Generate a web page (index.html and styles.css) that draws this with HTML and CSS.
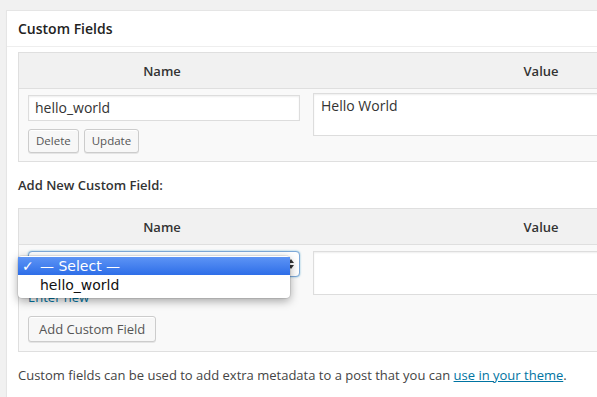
FILE: index.html
```html
<!DOCTYPE html>
<html>
<head>
<meta charset="utf-8">
<link rel="stylesheet" href="styles.css">
</head>
<body>
<div class="wrap">
  <div class="postbox">
    <h3 class="hndle">Custom Fields</h3>
    <div class="inside">
      <table class="list-table">
        <thead>
          <tr><th class="col-name">Name</th><th class="col-value">Value</th></tr>
        </thead>
        <tbody>
          <tr>
            <td class="cell-name">
              <div class="text-input">hello_world</div>
              <div class="btn-row">
                <span class="btn btn-small">Delete</span>
                <span class="btn btn-small">Update</span>
              </div>
            </td>
            <td class="cell-value">
              <div class="textarea">Hello World</div>
            </td>
          </tr>
        </tbody>
      </table>

      <p class="add-title">Add New Custom Field:</p>

      <table class="list-table">
        <thead>
          <tr><th class="col-name">Name</th><th class="col-value">Value</th></tr>
        </thead>
        <tbody>
          <tr>
            <td class="cell-name new">
              <div class="select">
                <svg class="arrows" width="6" height="10" viewBox="0 0 6 10"><path d="M0 4 L3 0 L6 4 Z M0 6 L3 10 L6 6 Z" fill="#333"/></svg>
              </div>
              <a class="enter-new" href="#">Enter new</a>
              <div class="btn-row add-row">
                <span class="btn">Add Custom Field</span>
              </div>
            </td>
            <td class="cell-value new">
              <div class="textarea tall"></div>
            </td>
          </tr>
        </tbody>
      </table>

      <p class="note">Custom fields can be used to add extra metadata to a post that you can <a href="#">use in your theme</a>.</p>
    </div>
  </div>
</div>

<div class="popup">
  <div class="opt selected"><span class="check">✓</span>— Select —</div>
  <div class="opt"><span class="check"></span>hello_world</div>
</div>
</body>
</html>
```

FILE: styles.css
```css
html, body {
  margin: 0;
  padding: 0;
  overflow: hidden;
}

body {
  background: #f1f1f1;
  font-family: "Open Sans", "Liberation Sans", sans-serif;
  font-size: 13px;
  color: #444;
  width: 597px;
  height: 397px;
  position: relative;
}

.wrap {
  padding: 10px 0 0 6px;
}

.postbox {
  width: 760px;
  background: #fff;
  border: 1px solid #e5e5e5;
  box-shadow: 0 1px 1px rgba(0, 0, 0, 0.04);
  padding-bottom: 30px;
}

.hndle {
  margin: 0;
  height: 35px;
  line-height: 35px;
  font-size: 14px;
  font-weight: 600;
  color: #222;
  padding-left: 11px;
  border-bottom: 1px solid #eee;
}

.inside {
  padding: 5px 11px 0 11px;
}

.list-table {
  width: 760px;
  border: 1px solid #dfdfdf;
  border-spacing: 0;
  border-collapse: separate;
  background: #f9f9f9;
}

.list-table th {
  height: 35px;
  padding: 0;
  background: #f1f1f1;
  border-bottom: 1px solid #dfdfdf;
  font-weight: 600;
  font-size: 13px;
  color: #333;
  text-align: center;
}

.col-name {
  width: 286px;
}

.list-table td {
  padding: 0;
  vertical-align: top;
}

.cell-name {
  padding: 6px 0 8px 9px !important;
}

.cell-value {
  padding: 4px 0 8px 8px !important;
}

.text-input {
  width: 272px;
  height: 26px;
  box-sizing: border-box;
  border: 1px solid #ddd;
  box-shadow: inset 0 1px 2px rgba(0, 0, 0, 0.07);
  background: #fff;
  font-size: 14px;
  line-height: 24px;
  color: #333;
  padding: 0 6px;
}

.btn-row {
  display: flex;
  gap: 5px;
  margin-top: 8px;
}

.btn {
  display: inline-block;
  box-sizing: border-box;
  height: 26px;
  line-height: 24px;
  padding: 0 10px;
  font-size: 13px;
  color: #555;
  background: #f7f7f7;
  border: 1px solid #ccc;
  border-radius: 3px;
  box-shadow: inset 0 1px 0 #fff, 0 1px 0 rgba(0, 0, 0, 0.08);
}

.btn-small {
  height: 24px;
  line-height: 22px;
  padding: 0 7px;
  font-size: 11.5px;
}

.textarea {
  height: 43px;
  box-sizing: border-box;
  border: 1px solid #ddd;
  box-shadow: inset 0 1px 2px rgba(0, 0, 0, 0.07);
  background: #fff;
  font-size: 14px;
  line-height: 20px;
  color: #333;
  padding: 2px 7px;
}

.textarea.tall {
  height: 44px;
}

.cell-value.new {
  padding-top: 6px !important;
}

.cell-name.new {
  padding-bottom: 9px !important;
}

.select {
  position: relative;
  width: 272px;
  height: 26px;
  box-sizing: border-box;
  border: 1px solid #7ea9d8;
  border-radius: 4px;
  background: #fff;
  box-shadow: 0 0 2px rgba(30, 140, 190, 0.6);
}

.arrows {
  position: absolute;
  right: 5px;
  top: 7px;
}

.enter-new {
  display: block;
  margin-top: 11px;
  line-height: 18px;
  font-size: 13px;
  color: #0074a2;
  text-decoration: none;
}

.add-row {
  margin-top: 10px;
}

.add-title {
  margin: 13px 0;
  line-height: 20px;
  font-weight: 600;
  font-size: 13px;
  color: #333;
}

.note {
  margin: 13px 0 0 0;
  line-height: 20px;
  font-size: 13px;
  color: #444;
}

.note a {
  color: #0074a2;
  text-decoration: underline;
}

.popup {
  position: absolute;
  left: 18px;
  top: 256px;
  width: 272px;
  box-sizing: border-box;
  padding: 1px 0 3px 0;
  background: #fff;
  border-radius: 4px;
  box-shadow: 0 3px 10px rgba(0, 0, 0, 0.35), 0 0 0 1px rgba(0, 0, 0, 0.08);
  font-family: "DejaVu Sans", "Liberation Sans", sans-serif;
  font-size: 14px;
  color: #111;
}

.opt {
  height: 18px;
  line-height: 18px;
  display: flex;
  align-items: center;
}

.opt + .opt {
  height: 20px;
  line-height: 20px;
}

.opt.selected {
  color: #fff;
  background: linear-gradient(#5d94f5, #2e6ee8);
}

.check {
  width: 22px;
  padding-left: 4px;
  box-sizing: border-box;
  display: inline-block;
  flex: none;
}
```
